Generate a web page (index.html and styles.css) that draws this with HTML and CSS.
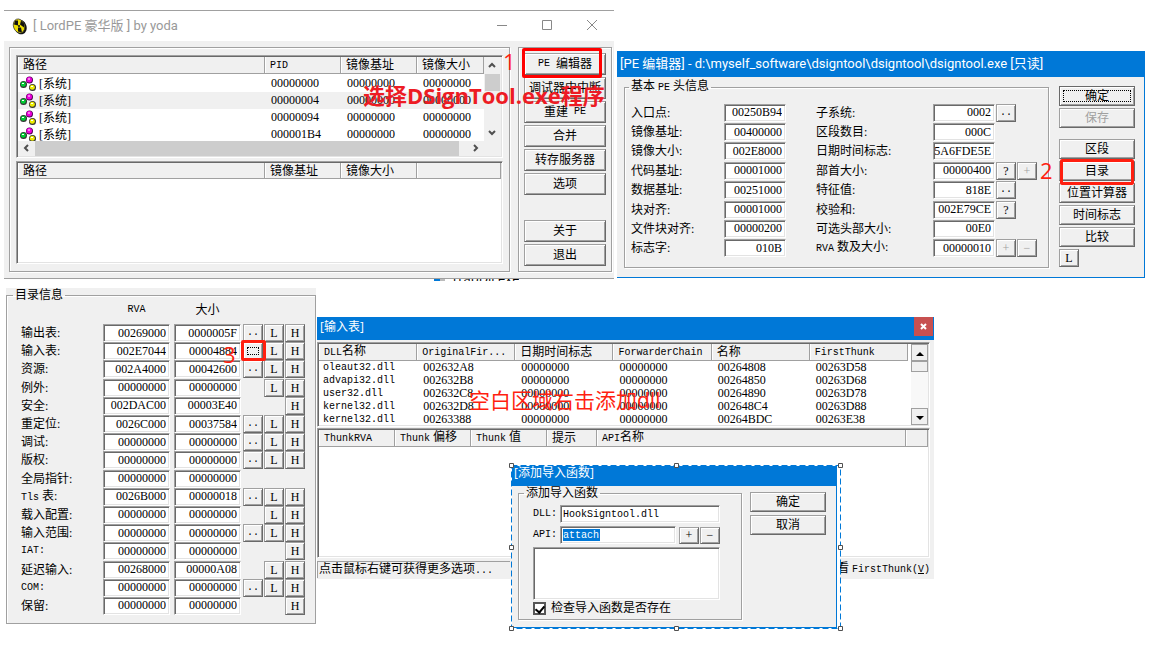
FILE: index.html
```html
<!DOCTYPE html>
<html lang="zh-CN">
<head>
<meta charset="utf-8">
<title>LordPE</title>
<link rel="stylesheet" href="styles.css">
</head>
<body>
<svg class="defs" aria-hidden="true">
  <symbol id="balls" viewBox="0 0 17 16">
    <circle cx="3.500" cy="8.500" r="3.500" fill="#333"/><circle cx="9.500" cy="4" r="3.500" fill="#505"/><circle cx="12.500" cy="11.500" r="3.500" fill="#333"/>
    <circle cx="3.300" cy="8.300" r="2.500" fill="#0c3"/><circle cx="9.300" cy="3.800" r="2.700" fill="#e0d"/><circle cx="12.300" cy="11.300" r="2.500" fill="#ee0"/>
    <path d="M2 7.500h2M8 3h2M11 10.500h2" stroke="#fff" stroke-width="1"/>
  </symbol>
</svg>
<main class="desktop">
  <div class="behind"><i></i><span>TrapDll.exe</span></div>

  <section class="window lord">
    <header class="lord-title">
      <svg class="logo" viewBox="0 0 16 16"><ellipse cx="8.500" cy="8.500" rx="6" ry="7.500" fill="#111" transform="rotate(-20 8.500 8.500)"/><ellipse cx="7" cy="7.500" rx="5.500" ry="7.200" fill="#eee000" stroke="#333" stroke-width=".7" transform="rotate(-20 7 7.500)"/><path d="M6 7 2 6 3 2 6 2zM8 6l1-4 3 3 0 4zM6 9l3 0 1 5-4-1z" fill="#111"/><circle cx="7" cy="7.500" r="1" fill="#111"/></svg>
      <h1>[ LordPE 豪华版 ] by yoda</h1>
      <div class="caption">
        <button aria-label="最小化"><svg viewBox="0 0 12 12"><path d="M1 6.500h10"/></svg></button>
        <button aria-label="最大化"><svg viewBox="0 0 12 12"><path d="M1.500 1.500h9v9h-9z"/></svg></button>
        <button aria-label="关闭"><svg viewBox="0 0 12 12"><path d="M1 1l10 10M11 1 1 11"/></svg></button>
      </div>
    </header>
    <div class="lord-body">
      <div class="panel lists">
        <div class="sunk process">
          <div class="view">
            <table class="list procs">
              <colgroup><col class="c-path"><col class="c-num"><col class="c-num"><col></colgroup>
              <thead><tr><th>路径</th><th><span class="m">PID</span></th><th>镜像基址</th><th>镜像大小</th></tr></thead>
              <tbody>
                <tr><td><svg><use href="#balls"/></svg><span>[系统]</span></td><td>00000000</td><td>00000000</td><td>00000000</td></tr>
                <tr class="hot"><td><svg><use href="#balls"/></svg><span>[系统]</span></td><td>00000004</td><td>00000000</td><td>00000000</td></tr>
                <tr><td><svg><use href="#balls"/></svg><span>[系统]</span></td><td>00000094</td><td>00000000</td><td>00000000</td></tr>
                <tr><td><svg><use href="#balls"/></svg><span>[系统]</span></td><td>000001B4</td><td>00000000</td><td>00000000</td></tr>
              </tbody>
            </table>
            <div class="vbar"><svg viewBox="0 0 9 7"><path d="M1 5l3-3 3 3"/></svg><i></i><b></b><svg viewBox="0 0 9 7"><path d="M1 2l3 3 3-3"/></svg></div>
          </div>
          <div class="hbar"><svg viewBox="0 0 7 9"><path d="M5 1 2 4l3 3"/></svg><i></i><svg viewBox="0 0 7 9"><path d="M2 1l3 3-3 3"/></svg></div>
        </div>
        <div class="sunk modules">
          <table class="list">
            <colgroup><col class="c-path"><col class="c-num"><col class="c-num"><col></colgroup>
            <thead><tr><th>路径</th><th>镜像基址</th><th>镜像大小</th><th></th></tr></thead>
          </table>
        </div>
      </div>
      <div class="panel side">
        <button class="btn"><span class="m">PE</span> 编辑器</button>
        <button class="btn">调试器中中断</button>
        <button class="btn">重建 <span class="m">PE</span></button>
        <button class="btn">合并</button>
        <button class="btn">转存服务器</button>
        <button class="btn">选项</button>
        <button class="btn apart">关于</button>
        <button class="btn">退出</button>
      </div>
    </div>
  </section>

  <section class="window editor">
    <header class="blue">[PE 编辑器] - d:\myself_software\dsigntool\dsigntool\dsigntool.exe [只读]</header>
    <div class="editor-body">
      <fieldset>
        <legend>基本 <span class="m">PE</span> 头信息</legend>
        <div class="col left">
          <div><label for="e1">入口点:</label><input id="e1" value="00250B94"></div>
          <div><label for="e2">镜像基址:</label><input id="e2" value="00400000"></div>
          <div><label for="e3">镜像大小:</label><input id="e3" value="002E8000"></div>
          <div><label for="e4">代码基址:</label><input id="e4" value="00001000"></div>
          <div><label for="e5">数据基址:</label><input id="e5" value="00251000"></div>
          <div><label for="e6">块对齐:</label><input id="e6" value="00001000"></div>
          <div><label for="e7">文件块对齐:</label><input id="e7" value="00000200"></div>
          <div><label for="e8">标志字:</label><input id="e8" value="010B"></div>
        </div>
        <div class="col right">
          <div><label for="f1">子系统:</label><input id="f1" value="0002"><button class="btn m">..</button></div>
          <div><label for="f2">区段数目:</label><input id="f2" value="000C"></div>
          <div><label for="f3">日期时间标志:</label><input id="f3" value="5A6FDE5E"></div>
          <div><label for="f4">部首大小:</label><input id="f4" value="00000400"><button class="btn">?</button><button class="btn" disabled>+</button></div>
          <div><label for="f5">特征值:</label><input id="f5" value="818E"><button class="btn m">..</button></div>
          <div><label for="f6">校验和:</label><input id="f6" value="002E79CE"><button class="btn">?</button></div>
          <div><label for="f7">可选头部大小:</label><input id="f7" value="00E0"></div>
          <div><label for="f8"><span class="m">RVA</span> 数及大小:</label><input id="f8" value="00000010"><button class="btn" disabled>+</button><button class="btn" disabled>−</button></div>
        </div>
      </fieldset>
      <div class="actions">
        <button class="btn default">确定</button>
        <button class="btn" disabled>保存</button>
        <button class="btn apart">区段</button>
        <button class="btn">目录</button>
        <button class="btn">位置计算器</button>
        <button class="btn">时间标志</button>
        <button class="btn">比较</button>
        <button class="btn small">L</button>
      </div>
    </div>
  </section>

  <section class="window directory">
    <fieldset>
      <legend>目录信息</legend>
      <div class="dir-head"><span class="m">RVA</span><span>大小</span></div>
      <div class="dir-rows">
        <div><label for="d1">输出表:</label><input id="d1" value="00269000"><input aria-label="输出表大小" value="0000005F"><button class="btn a m">..</button><button class="btn l">L</button><button class="btn h">H</button></div>
        <div><label for="d2">输入表:</label><input id="d2" value="002E7044"><input aria-label="输入表大小" value="00004884"><button class="btn a focus" aria-label="输入表"><i></i></button><button class="btn l">L</button><button class="btn h">H</button></div>
        <div><label for="d3">资源:</label><input id="d3" value="002A4000"><input aria-label="资源大小" value="00042600"><button class="btn a m">..</button><button class="btn l">L</button><button class="btn h">H</button></div>
        <div><label for="d4">例外:</label><input id="d4" value="00000000"><input aria-label="例外大小" value="00000000"><button class="btn l">L</button><button class="btn h">H</button></div>
        <div><label for="d5">安全:</label><input id="d5" value="002DAC00"><input aria-label="安全大小" value="00003E40"><button class="btn h">H</button></div>
        <div><label for="d6">重定位:</label><input id="d6" value="0026C000"><input aria-label="重定位大小" value="00037584"><button class="btn a m">..</button><button class="btn l">L</button><button class="btn h">H</button></div>
        <div><label for="d7">调试:</label><input id="d7" value="00000000"><input aria-label="调试大小" value="00000000"><button class="btn a m">..</button><button class="btn l">L</button><button class="btn h">H</button></div>
        <div><label for="d8">版权:</label><input id="d8" value="00000000"><input aria-label="版权大小" value="00000000"><button class="btn a m">..</button><button class="btn l">L</button><button class="btn h">H</button></div>
        <div><label for="d9">全局指针:</label><input id="d9" value="00000000"><input aria-label="全局指针大小" value="00000000"></div>
        <div><label for="d10"><span class="m">Tls</span> 表:</label><input id="d10" value="0026B000"><input aria-label="Tls 表大小" value="00000018"><button class="btn a m">..</button><button class="btn l">L</button><button class="btn h">H</button></div>
        <div><label for="d11">载入配置:</label><input id="d11" value="00000000"><input aria-label="载入配置大小" value="00000000"><button class="btn l">L</button><button class="btn h">H</button></div>
        <div><label for="d12">输入范围:</label><input id="d12" value="00000000"><input aria-label="输入范围大小" value="00000000"><button class="btn a m">..</button><button class="btn l">L</button><button class="btn h">H</button></div>
        <div><label for="d13" class="m">IAT:</label><input id="d13" value="00000000"><input aria-label="IAT 大小" value="00000000"><button class="btn h">H</button></div>
        <div><label for="d14">延迟输入:</label><input id="d14" value="00268000"><input aria-label="延迟输入大小" value="00000A08"><button class="btn l">L</button><button class="btn h">H</button></div>
        <div><label for="d15" class="m">COM:</label><input id="d15" value="00000000"><input aria-label="COM 大小" value="00000000"><button class="btn a m">..</button><button class="btn l">L</button><button class="btn h">H</button></div>
        <div><label for="d16">保留:</label><input id="d16" value="00000000"><input aria-label="保留大小" value="00000000"><button class="btn h">H</button></div>
      </div>
    </fieldset>
  </section>

  <section class="window imports">
    <header class="blue"><span>[输入表]</span><button class="close" aria-label="关闭"><svg viewBox="0 0 8 8"><path d="M1 1l5 5M6 1 1 6"/></svg></button></header>
    <div class="sunk dlls">
      <table class="list tight">
        <thead><tr><th><span class="m">DLL</span>名称</th><th><span class="m">OriginalFir...</span></th><th>日期时间标志</th><th><span class="m">ForwarderChain</span></th><th>名称</th><th><span class="m">FirstThunk</span></th></tr></thead>
        <tbody>
          <tr><td class="m">oleaut32.dll</td><td>002632A8</td><td>00000000</td><td>00000000</td><td>00264808</td><td>00263D58</td></tr>
          <tr><td class="m">advapi32.dll</td><td>002632B8</td><td>00000000</td><td>00000000</td><td>00264850</td><td>00263D68</td></tr>
          <tr><td class="m">user32.dll</td><td>002632C8</td><td>00000000</td><td>00000000</td><td>00264890</td><td>00263D78</td></tr>
          <tr><td class="m">kernel32.dll</td><td>002632D8</td><td>00000000</td><td>00000000</td><td>002648C4</td><td>00263D88</td></tr>
          <tr><td class="m">kernel32.dll</td><td>00263388</td><td>00000000</td><td>00000000</td><td>00264BDC</td><td>00263E38</td></tr>
        </tbody>
      </table>
      <div class="classic-bar"><button aria-label="向上"><svg viewBox="0 0 8 5"><path d="M4 0l4 4H0z"/></svg></button><i></i><b></b><button aria-label="向下"><svg viewBox="0 0 8 5"><path d="M0 0h8L4 4z"/></svg></button></div>
    </div>
    <div class="sunk thunks">
      <table class="list">
        <colgroup><col class="t1"><col class="t1"><col class="t1"><col class="t2"><col><col class="t3"></colgroup>
        <thead><tr><th><span class="m">ThunkRVA</span></th><th><span class="m">Thunk</span> 偏移</th><th><span class="m">Thunk</span> 值</th><th>提示</th><th><span class="m">API</span>名称</th><th></th></tr></thead>
      </table>
    </div>
    <footer class="status"><span class="hint">点击鼠标右键可获得更多选项<span class="m">...</span></span><span>看 <span class="m">FirstThunk(<u>V</u>)</span></span></footer>
  </section>

  <section class="window dialog">
    <div class="dialog-frame">
      <header class="blue">[添加导入函数]</header>
      <div class="dialog-body">
        <fieldset>
          <legend>添加导入函数</legend>
          <div class="row"><label for="dll" class="m">DLL:</label><input id="dll" class="m" value="HookSigntool.dll"></div>
          <div class="row"><label for="api" class="m">API:</label><input id="api" class="m picked" value="attach"><button class="btn">+</button><button class="btn">−</button></div>
          <div class="sunk box"></div>
          <label class="check"><input type="checkbox" checked>检查导入函数是否存在</label>
        </fieldset>
        <div class="dialog-buttons"><button class="btn">确定</button><button class="btn">取消</button></div>
      </div>
    </div>
    <svg class="selection" viewBox="0 0 334 168"><path class="dash" d="M2.500 2.500h329v163h-329z"/><path class="handles" d="M.5.5h4v4h-4zM165.500.5h4v4h-4zM329.500.5h4v4h-4zM.5 82.500h4v4h-4zM329.500 82.500h4v4h-4zM.5 163.500h4v4h-4zM165.500 163.500h4v4h-4zM329.500 163.500h4v4h-4z"/></svg>
  </section>

  <div class="ring ring1"></div><div class="ring ring2"></div><div class="ring ring3"></div>
  <p class="note n1">1</p><p class="note n2">2</p><p class="note n3">3</p>
  <p class="note pick">选择DSignTool.exe程序</p>
  <p class="note add">空白区域右击添加dll</p>
</main>
</body>
</html>
```

FILE: styles.css
```css
* { box-sizing: border-box; }
body { margin: 0; background: #fff; color: #000; font: 12px/14px "Liberation Serif", "Noto Sans CJK SC", serif; }
button, input { font: inherit; color: inherit; margin: 0; }
.defs { position: absolute; width: 0; height: 0; }
.desktop { position: relative; min-height: 100vh; overflow: hidden; }
.m { font-family: "Liberation Mono", "Noto Sans CJK SC", monospace; font-size: 10px; }
.window { position: absolute; background: #f0f0f0; }

.btn { display: flex; align-items: center; justify-content: center; padding: 0; gap: 6px; white-space: nowrap; background: #f0f0f0; border: 1px solid; border-color: #a0a0a0 #696969 #696969 #a0a0a0; border-radius: 0; box-shadow: inset 1px 1px #fff, inset -1px -1px #a0a0a0; }
.btn:disabled { color: #a0a0a0; }
.sunk, input { background: #fff; border: 1px solid; border-color: #a0a0a0 #fff #fff #a0a0a0; border-radius: 0; box-shadow: inset 1px 1px #696969, inset -1px -1px #e3e3e3; }
input { min-width: 0; height: 18px; padding: 0 3px 0 0; text-align: right; outline: none; }
.sunk { padding: 1px; }
.panel, fieldset { border: 1px solid #a0a0a0; box-shadow: 1px 1px #fff, inset 1px 1px #fff; }
fieldset { position: relative; margin: 0; padding: 0; min-width: 0; }
legend { margin-left: -2px; padding: 0 2px; line-height: 14px; }
label { white-space: nowrap; }

.list { width: 100%; table-layout: fixed; border-collapse: separate; border-spacing: 0; }
.list th { height: 16px; padding: 0 0 0 5px; overflow: hidden; text-align: left; font-weight: 400; white-space: nowrap; line-height: 14px; background: #f0f0f0; border-right: 1px solid #a0a0a0; border-bottom: 1px solid #a0a0a0; box-shadow: inset 1px 0 #fff; }
.list td { height: 17px; padding: 0 0 0 6px; white-space: nowrap; line-height: 13px; }
.blue { background: #0078d7; color: #fff; font-family: "Open Sans", "Noto Sans CJK SC", sans-serif; }

.behind { position: absolute; left: 434px; top: 270px; display: flex; gap: 6px; height: 11px; overflow: hidden; font: 13px/16px "Open Sans", sans-serif; }
.behind i { width: 11px; height: 11px; background: #0078d7; border-right: 5px solid #bbb; }

.lord { left: 4px; top: 10px; width: 610px; border-top: 1px solid #a0a0a0; border-bottom: 1px solid #a0a0a0; }
.lord-title { display: flex; align-items: center; height: 30px; padding-left: 8px; background: #fff; color: #999; }
.lord-title h1 { flex: 1; margin: 0 0 0 5px; font: 13px/18px Roboto, "Noto Sans CJK SC", sans-serif; }
.logo { width: 16px; height: 17px; }
.caption { display: flex; }
.caption button { width: 45px; height: 28px; padding: 0; border: 0; background: none; }
.caption svg { width: 12px; height: 12px; fill: none; stroke: #888; }
.lord-body { display: flex; gap: 8px; padding: 6px 2px 6px 5px; }
.lists { flex: 1; display: flex; flex-direction: column; gap: 3px; padding: 7px 6px; }
.c-path { width: 247px; }
.c-num { width: 76px; }
.view { display: flex; height: 84px; overflow: hidden; }
.view .list { flex: 1; align-self: flex-start; }
.procs td:first-child { padding: 0 0 0 2px; }
.procs td svg { display: inline-block; width: 17px; height: 16px; margin-right: 2px; vertical-align: middle; }
.procs td span { vertical-align: middle; }
.procs tbody::before { content: ""; display: table-row; height: 1px; }
.hot { background: #f0f0f0; }
.vbar { display: flex; flex-direction: column; align-items: center; justify-content: space-between; width: 17px; padding: 5px 0; background: #f0f0f0; }
.vbar svg { width: 9px; height: 7px; }
.vbar i { width: 15px; height: 17px; background: #cdcdcd; }
.vbar b { flex: 1; }
.vbar svg, .hbar svg { flex: none; fill: none; stroke: #505050; stroke-width: 2; }
.vbar svg:first-child { margin-bottom: 5px; }
.hbar { display: flex; align-items: center; height: 15px; padding-left: 5px; background: #f0f0f0; }
.hbar svg { width: 7px; height: 9px; }
.hbar i { flex: 1; height: 15px; margin: 0 13px 0 5px; background: #cdcdcd; }
.hbar svg:last-child { margin-right: 22px; }
.modules { height: 103px; }
.side { display: flex; flex-direction: column; gap: 2px; width: 94px; padding: 5px; }
.side .btn { height: 22px; }
.side .apart { margin-top: 23px; }

.editor { left: 617px; top: 51px; width: 528px; border: solid #0078d7; border-width: 0 1px 1px 0; }
.editor .blue { height: 26px; padding-left: 3px; font: 13px/25px Roboto, "Noto Sans CJK SC", sans-serif; white-space: nowrap; }
.editor-body { display: flex; gap: 10px; padding: 2px 9px 9px 7px; }
.editor fieldset { display: flex; flex: 1; height: 189px; padding: 8px 0 8px 6px; }
.col { display: grid; grid-auto-rows: 1fr; height: 155px; }
.col > div { display: grid; grid-template-columns: 93px 62px; align-items: center; }
.col.right { margin-left: 30px; }
.col.right > div { grid-template-columns: 116px 62px 20px 20px; column-gap: 1px; }
.col .btn, .dir-rows .btn { height: 18px; }
.actions { display: flex; flex-direction: column; gap: 2px; width: 76px; padding-top: 7px; }
.actions .btn { height: 20px; }
.actions .default { outline: 1px dotted #000; outline-offset: -5px; border-color: #696969; }
.actions .apart { margin-top: 9px; }
.actions .small { width: 20px; height: 18px; }

.directory { left: 6px; top: 288px; width: 310px; }
.directory fieldset { padding: 0 10px 8px 14px; }
.directory legend { margin-left: -8px; }
.dir-head { display: grid; grid-template-columns: 78px 67px 67px; column-gap: 4px; height: 22px; text-align: center; line-height: 16px; }
.dir-head span:first-child { grid-column: 2; }
.dir-rows { display: grid; grid-auto-rows: 1fr; height: 291px; }
.dir-rows > div { display: grid; grid-template-columns: 82px 67px 4px 67px 2px 20px 1px 20px 1px 20px; align-items: center; }
.dir-rows input + input { grid-column: 4; }
.dir-rows .a { grid-column: 6; }
.dir-rows .l { grid-column: 8; }
.dir-rows .h { grid-column: 10; }
.focus i { width: 12px; height: 8px; border: 1px dotted #000; }

.imports { left: 317px; top: 317px; width: 617px; padding-bottom: 1px; }
.imports .blue { display: flex; justify-content: space-between; align-items: flex-start; height: 23px; margin-bottom: 2px; padding: 0 1px 0 3px; line-height: 20px; }
.close { width: 19px; height: 19px; padding: 0; border: 0; background: #c75050; }
.close svg { width: 8px; height: 8px; fill: none; stroke: #fff; stroke-width: 2; }
.imports .sunk { margin-right: 4px; }
.dlls { display: flex; height: 85px; }
.dlls .list { width: 589px; align-self: flex-start; }
.list.tight td { height: 13px; padding-left: 6px; line-height: 13px; }
.list.tight td:first-child { padding-left: 4px; }
.classic-bar { display: flex; flex-direction: column; width: 17px; margin-left: auto; background: #f8f8f8; }
.classic-bar button { height: 17px; padding: 0; line-height: 8px; background: #f0f0f0; border: 1px solid #a0a0a0; }
.classic-bar svg { width: 8px; height: 5px; }
.classic-bar i { height: 11px; background: #f0f0f0; border: 1px solid #a0a0a0; }
.classic-bar b { flex: 1; }
.thunks { height: 130px; margin-top: 1px; }
.t1 { width: 76px; }
.t2 { width: 50px; }
.t3 { width: 22px; }
.status { display: flex; justify-content: space-between; align-items: center; height: 18px; margin: 2px 4px 0 0; }
.hint { flex: 0 0 193px; padding-left: 1px; border-top: 1px solid #a0a0a0; border-left: 1px solid #a0a0a0; }

.dialog { left: 509px; top: 463px; padding: 3px; background: none; }
.selection { position: absolute; left: 0; top: 0; width: 334px; height: 168px; fill: none; pointer-events: none; }
.dash { stroke: #0078d7; stroke-dasharray: 6 3; }
.handles { fill: #fff; stroke: #505050; }
.dialog-frame { width: 325px; height: 162px; margin-right: 3px; background: #f0f0f0; border: solid #0078d7; border-width: 0 1px 1px 0; box-shadow: 3px 0 #fff; }
.dialog .blue { height: 20px; padding-left: 2px; line-height: 14px; }
.dialog-body { display: flex; gap: 8px; padding: 0 10px 0 6px; }
.dialog fieldset { flex: 1; padding: 5px 21px 4px 14px; }
.dialog legend { margin-left: -9px; }
.dialog .row { display: flex; align-items: center; gap: 1px; margin-bottom: 3px; }
.dialog .row label { width: 26px; }
.dialog .row input { flex: 1; height: 18px; padding: 2px; text-align: left; }
.dialog .row .picked { margin-right: 2px; color: #fff; background: linear-gradient(#0078d7, #0078d7) 0 0 / 37px 100% no-repeat content-box, #fff; }
.dialog .row .btn { width: 20px; height: 17px; }
.box { height: 53px; }
.check { display: flex; align-items: center; gap: 5px; margin-top: 1px; }
.check input { appearance: none; width: 13px; height: 13px; padding: 0 0 2px; border: 2px solid #555; box-shadow: none; display: grid; place-items: center; }
.check input:checked::after { content: ""; width: 4px; height: 7px; border: solid #000; border-width: 0 2px 2px 0; transform: rotate(40deg); }
.dialog-buttons { display: flex; flex-direction: column; gap: 3px; width: 76px; padding-top: 6px; }
.dialog-buttons .btn { height: 20px; }

.ring { position: absolute; border: 3px solid #f00; border-radius: 2px; pointer-events: none; }
.ring1 { left: 522px; top: 48px; width: 80px; height: 30px; }
.ring2 { left: 1060px; top: 159px; width: 74px; height: 26px; border-color: #ff1f10; }
.ring3 { left: 241px; top: 340px; width: 25px; height: 21px; border-color: #ff1f10; }
.note { position: absolute; margin: 0; color: #ff1f10; white-space: nowrap; font: 22px/24px "Open Sans", "Noto Sans CJK SC", sans-serif; }
.n1 { left: 503px; top: 49px; }
.n2 { left: 1040px; top: 158px; }
.n3 { left: 223px; top: 342px; }
.pick { left: 363px; top: 83px; color: #ed1c24; font-weight: 700; }
.add { left: 469px; top: 388px; font-size: 21px; }
```
